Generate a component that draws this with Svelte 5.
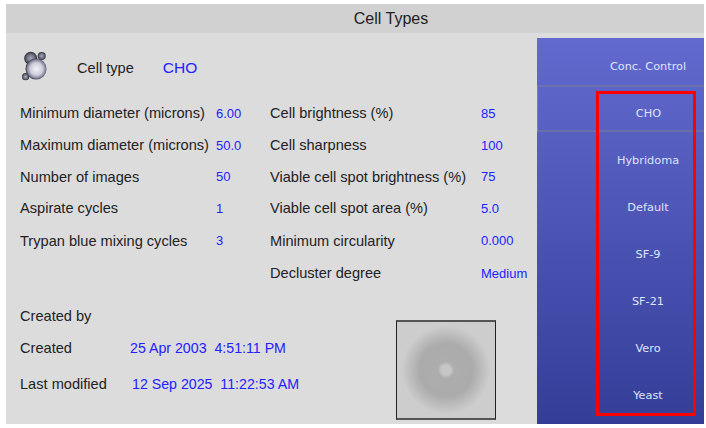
<script>
  // left and right parameter columns, one row per entry
  const params = [
    ['Minimum diameter (microns)', '6.00', 'Cell brightness (%)', '85'],
    ['Maximum diameter (microns)', '50.0', 'Cell sharpness', '100'],
    ['Number of images', '50', 'Viable cell spot brightness (%)', '75'],
    ['Aspirate cycles', '1', 'Viable cell spot area (%)', '5.0'],
    ['Trypan blue mixing cycles', '3', 'Minimum circularity', '0.000'],
    ['', '', 'Decluster degree', 'Medium']
  ];

  const cellTypes = ['CHO', 'Hybridoma', 'Default', 'SF-9', 'SF-21', 'Vero', 'Yeast'];
</script>

<div class="panel">
  <header class="title">Cell Types</header>

  <div class="content">
    <main class="main">
      <div class="type-row">
        <svg class="cell-icon" viewBox="0 0 32 32" width="32" height="32" aria-hidden="true">
          <defs>
            <radialGradient id="big" cx="0.52" cy="0.5" r="0.52">
              <stop offset="0" stop-color="#f2f2f6" />
              <stop offset="0.55" stop-color="#cfcfdd" />
              <stop offset="0.82" stop-color="#8c8ca2" />
              <stop offset="1" stop-color="#2e2e38" />
            </radialGradient>
            <radialGradient id="small" cx="0.5" cy="0.5" r="0.52">
              <stop offset="0" stop-color="#aaaabd" />
              <stop offset="0.6" stop-color="#6c6c80" />
              <stop offset="1" stop-color="#26262e" />
            </radialGradient>
          </defs>
          <circle cx="9.7" cy="7.3" r="6.5" fill="url(#small)" />
          <circle cx="20.7" cy="5" r="4" fill="url(#small)" />
          <circle cx="4.6" cy="25.7" r="3.6" fill="url(#small)" />
          <circle cx="15" cy="18" r="10.5" fill="url(#big)" />
        </svg>
        <span class="type-label">Cell type</span>
        <span class="type-value">CHO</span>
      </div>

      <div class="params">
        {#each params as row}
          <span class="label">{row[0]}</span>
          <span class="value">{row[1]}</span>
          <span class="label">{row[2]}</span>
          <span class="value">{row[3]}</span>
        {/each}
      </div>

      <div class="bottom">
        <div class="meta">
          <div class="meta-row">Created by</div>
          <div class="meta-row">
            <span class="meta-label">Created</span>
            <span class="date">25 Apr 2003&nbsp;&nbsp;4:51:11 PM</span>
          </div>
          <div class="meta-row last">
            <span class="meta-label wide">Last modified</span>
            <span class="date">12 Sep 2025&nbsp;&nbsp;11:22:53 AM</span>
          </div>
        </div>
        <div class="thumb"></div>
      </div>
    </main>

    <aside class="sidebar">
      <div class="item">Conc. Control</div>
      {#each cellTypes as name, i}
        <div class="item" class:selected={i === 0}>{name}</div>
      {/each}
      <div class="highlight"></div>
    </aside>
  </div>
</div>

<style>
  :global(body) {
    background: #fff;
  }

  .panel {
    width: 698px;
    height: 420px;
    margin: 4px 0 0 6px;
    display: flex;
    flex-direction: column;
    background: #dcdcdc;
    font-family: "Liberation Sans", Arial, sans-serif;
    color: #222;
    font-size: 14.6px;
  }

  .title {
    height: 29px;
    flex: none;
    display: flex;
    align-items: center;
    justify-content: center;
    background: #d1d1d1;
    font-size: 16px;
    padding-left: 72px;
    box-sizing: border-box;
  }

  .content {
    flex: 1;
    display: flex;
    min-height: 0;
    padding-top: 5px;
  }

  .main {
    width: 531px;
    flex: none;
    padding-left: 14px;
    box-sizing: border-box;
  }

  .type-row {
    height: 59px;
    display: flex;
    align-items: center;
  }

  .cell-icon {
    margin-left: 1px;
    margin-top: -1px;
  }

  .type-label {
    margin-left: 24px;
  }

  .type-value {
    margin-left: 29px;
    color: #2222ff;
    font-size: 15.5px;
  }

  .params {
    display: grid;
    grid-template-columns: 196px 54px 211px auto;
    grid-template-rows: 32px 32px 31px 32px 33px 32px;
    align-items: center;
  }

  .value {
    color: #2222ff;
    font-size: 13px;
  }

  .bottom {
    display: flex;
    margin-top: 11px;
  }

  .meta {
    width: 376px;
  }

  .meta-row {
    height: 32px;
    display: flex;
    align-items: center;
  }

  .meta-row.last {
    margin-top: 4px;
  }

  .meta-label {
    width: 110px;
  }

  .meta-label.wide {
    width: 112px;
  }

  .date {
    color: #2222ff;
    font-size: 14.2px;
  }

  .thumb {
    width: 100px;
    height: 100px;
    margin-top: 20px;
    box-sizing: border-box;
    border: 1px solid #222;
    border-top: 2px solid #555;
    border-bottom: 2px solid #555;
    background: radial-gradient(circle closest-side, #c6c6c6 0, #c6c6c6 10%, #adadad 17%, #ababab 55%, #bcbcbc 74%, #cdcdcd 92%, #cdcdcd 100%);
  }

  .sidebar {
    position: relative;
    flex: 1;
    display: flex;
    flex-direction: column;
    background: linear-gradient(#636acf, #343e98);
  }

  .item {
    height: 47px;
    flex: none;
    display: flex;
    align-items: center;
    justify-content: center;
    padding: 10px 0 0 55px;
    box-sizing: border-box;
    font-family: "DejaVu Sans", sans-serif;
    font-size: 11.3px;
    color: #dfe4fb;
  }

  .item.selected {
    border-top: 2px solid #6d72ad;
    border-bottom: 2px solid #6a70a9;
    border-left: 1px solid #7b7fae;
  }

  .highlight {
    position: absolute;
    left: 59px;
    top: 53px;
    width: 100px;
    height: 325px;
    box-sizing: border-box;
    border: 3px solid #f00;
  }
</style>
